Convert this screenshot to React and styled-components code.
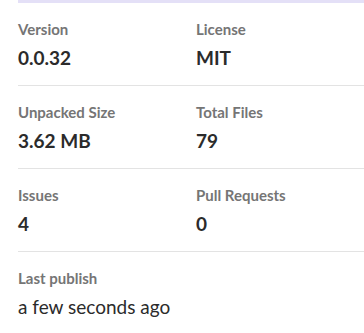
import React from "react";
import styled, { createGlobalStyle } from "styled-components";

const GlobalStyle = createGlobalStyle`
    body {
        margin: 0;
        background: #ffffff;
        font-family: Lato, "Liberation Sans", sans-serif;
    }
`;

const Sidebar = styled.aside`
    padding-left: 18px;
`;

const TopBar = styled.div`
    height: 3px;
    background-color: #e4e0f7;
`;

const Section = styled.div`
    display: grid;
    grid-template-columns: ${props => (props.single ? "1fr" : "178px 1fr")};
    padding: 16px 0 15px;
    border-bottom: 1px solid #e3e3e3;
`;

const Label = styled.h3`
    margin: 0 0 7px;
    font-size: 15px;
    line-height: 20px;
    font-weight: 700;
    color: #757575;
`;

const Value = styled.p`
    margin: 0;
    font-size: 19px;
    line-height: 24px;
    font-weight: ${props => (props.light ? 400 : 700)};
    color: #2b2b2b;
`;

const rows = [
    [
        { label: "Version", value: "0.0.32" },
        { label: "License", value: "MIT" },
    ],
    [
        { label: "Unpacked Size", value: "3.62 MB" },
        { label: "Total Files", value: "79" },
    ],
    [
        { label: "Issues", value: "4" },
        { label: "Pull Requests", value: "0" },
    ],
];

export default function App() {
    return (
        <Sidebar>
            <GlobalStyle />
            <TopBar />
            {rows.map((row, i) => (
                <Section key={i}>
                    {row.map(item => (
                        <div key={item.label}>
                            <Label>{item.label}</Label>
                            <Value>{item.value}</Value>
                        </div>
                    ))}
                </Section>
            ))}
            <Section single>
                <div>
                    <Label>Last publish</Label>
                    <Value light>a few seconds ago</Value>
                </div>
            </Section>
        </Sidebar>
    );
}
